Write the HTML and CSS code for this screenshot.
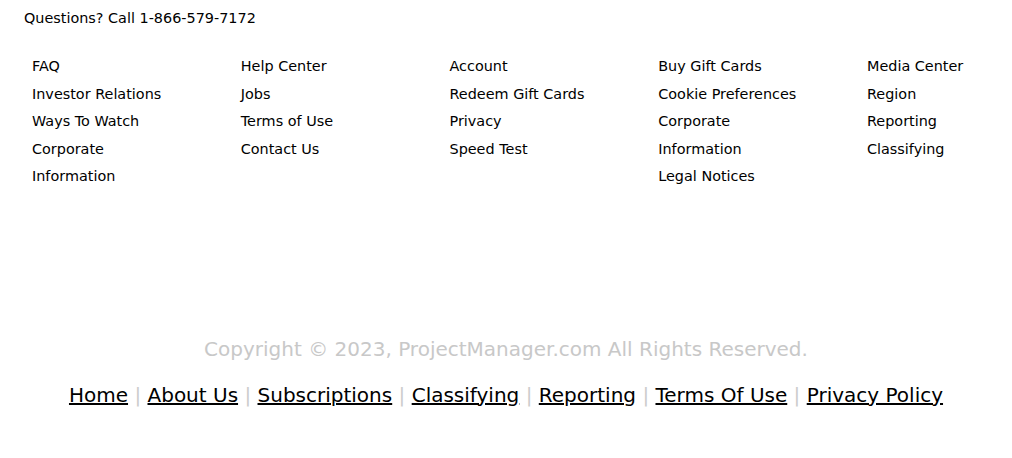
FILE: index.html
```html
<!DOCTYPE html>
<html lang="en">
<head>
    <meta charset="UTF-8">
    <title>Footer</title>
    <link rel="stylesheet" href="styles.css">
</head>
<body>
<footer class="footer">
    <div class="footer-phone">Questions? Call 1-866-579-7172</div>
    <div class="footer-columns">
        <ul class="footer-list">
            <li><a href="#">FAQ</a></li>
            <li><a href="#">Investor Relations</a></li>
            <li><a href="#">Ways To Watch</a></li>
            <li><a href="#">Corporate Information</a></li>
        </ul>
        <ul class="footer-list">
            <li><a href="#">Help Center</a></li>
            <li><a href="#">Jobs</a></li>
            <li><a href="#">Terms of Use</a></li>
            <li><a href="#">Contact Us</a></li>
        </ul>
        <ul class="footer-list">
            <li><a href="#">Account</a></li>
            <li><a href="#">Redeem Gift Cards</a></li>
            <li><a href="#">Privacy</a></li>
            <li><a href="#">Speed Test</a></li>
        </ul>
        <ul class="footer-list">
            <li><a href="#">Buy Gift Cards</a></li>
            <li><a href="#">Cookie Preferences</a></li>
            <li><a href="#">Corporate Information</a></li>
            <li><a href="#">Legal Notices</a></li>
        </ul>
        <ul class="footer-list">
            <li><a href="#">Media Center</a></li>
            <li><a href="#">Region</a></li>
            <li><a href="#">Reporting</a></li>
            <li><a href="#">Classifying</a></li>
        </ul>
    </div>
</footer>
<div class="bottom">
    <p class="copyright">Copyright © 2023, ProjectManager.com All Rights Reserved.</p>
    <nav class="bottom-links">
        <a href="#">Home</a> <span class="sep">|</span>
        <a href="#">About Us</a> <span class="sep">|</span>
        <a href="#">Subscriptions</a> <span class="sep">|</span>
        <a href="#">Classifying</a> <span class="sep">|</span>
        <a href="#">Reporting</a> <span class="sep">|</span>
        <a href="#">Terms Of Use</a> <span class="sep">|</span>
        <a href="#">Privacy Policy</a>
    </nav>
</div>
</body>
</html>
```

FILE: styles.css
```css
body {
    font-family: "DejaVu Sans", sans-serif;
    margin: 0;
    color: #000;
    background: #fff;
    overflow: hidden;
}
.footer {
    padding: 10px 24px 0;
    font-size: 14.4px;
}
.footer-phone {
    line-height: 17px;
}
.footer-columns {
    display: grid;
    grid-template-columns: repeat(5, 150px);
    column-gap: 58.75px;
    margin-top: 26px;
    padding-left: 8px;
}
.footer-list {
    list-style: none;
    margin: 0;
    padding: 0;
}
.footer-list li {
    line-height: 27.5px;
}
.footer-list a {
    color: #000;
    text-decoration: none;
}
.bottom {
    margin-top: 146px;
    text-align: center;
    font-size: 20px;
}
.copyright {
    color: #c8c8c8;
    margin: 0;
    line-height: 24px;
}
.bottom-links {
    margin-top: 22px;
    line-height: 24px;
}
.bottom-links a {
    color: #000;
    text-decoration: underline;
}
.sep {
    color: #ccc;
}
```
